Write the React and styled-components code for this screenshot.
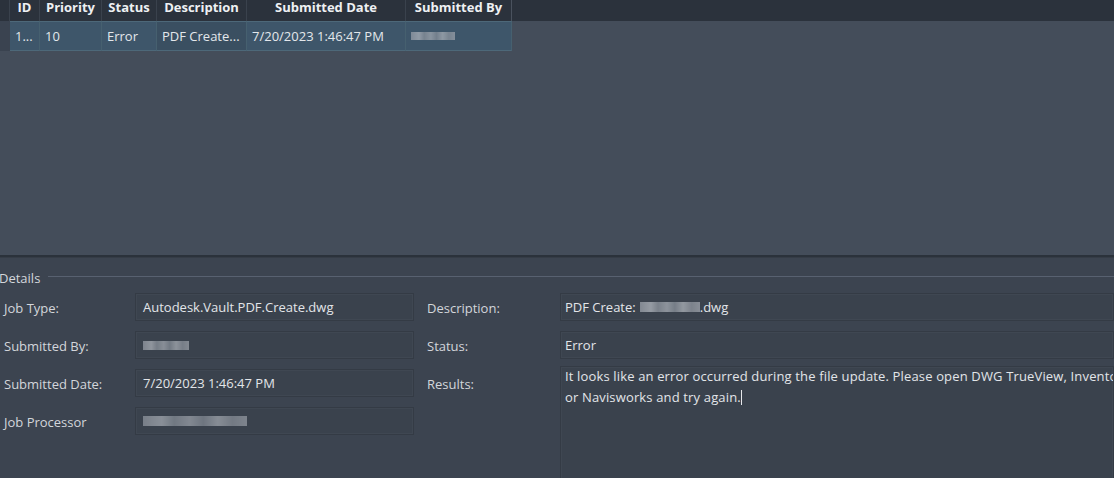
import React from 'react'
import styled, { createGlobalStyle } from 'styled-components'

const Global = createGlobalStyle`
    html, body {
        margin: 0;
        padding: 0;
        background: #3c4450;
        overflow: hidden;
    }
    * { box-sizing: border-box; }
`

const Window = styled.div`
    width: 1114px;
    height: 478px;
    display: flex;
    flex-direction: column;
    font-family: 'Open Sans', 'Liberation Sans', sans-serif;
    font-size: 13px;
    color: #dde0e4;
    overflow: hidden;
`

const GridArea = styled.div`
    height: 255px;
    flex: none;
    background: #444d5a;
    display: flex;
    flex-direction: column;
`

const cols = '10px 30px 62px 55px 90px 159px 106px'

const HeaderRow = styled.div`
    display: grid;
    height: 21px;
    background: #2b323c;
    width: 100%;
    grid-template-columns: ${cols} 1fr;
`

const HeaderCell = styled.div`
    font-weight: 700;
    color: #eef0f3;
    text-align: center;
    line-height: 14px;
    white-space: nowrap;
    overflow: hidden;
    border-right: ${p => (p.$last ? '1px solid #4a525e' : '1px solid #3a424d')};
`

const DataRow = styled.div`
    display: grid;
    grid-template-columns: ${cols};
    height: 30px;
`

const Cell = styled.div`
    display: flex;
    align-items: center;
    padding-left: 5px;
    white-space: nowrap;
    overflow: hidden;
    background: ${p => (p.$stub ? '#3a4350' : p.$dim ? '#3a4f61' : '#3e566a')};
    border-right: 1px solid ${p => (p.$stub ? '#3a4350' : '#46606f')};
    border-top: 1px solid ${p => (p.$stub ? '#3a4350' : '#4d6879')};
    border-bottom: 1px solid ${p => (p.$stub ? '#3a4350' : '#4d6879')};
    color: #e3e7eb;
`

const Splitter = styled.div`
    height: 3px;
    flex: none;
    background: #2b323b;
    border-bottom: 1px solid #353c46;
`

const Details = styled.div`
    flex: 1;
    background: #3c4450;
    padding-top: 12px;
`

const Legend = styled.div`
    display: flex;
    align-items: center;
    gap: 8px;
    margin-left: -1px;
    height: 16px;
    color: #d4d7dc;
`

const LegendLine = styled.div`
    flex: 1;
    height: 1px;
    background: #586170;
    margin-top: -3px;
`

const Fields = styled.div`
    display: grid;
    grid-template-columns: 135px 279px 146px 1fr;
    grid-auto-rows: 28px;
    row-gap: 10px;
    margin-top: 7px;
`

const Label = styled.div`
    display: flex;
    align-items: center;
    padding-left: ${p => (p.$right ? '13px' : '4px')};
    padding-top: 2px;
    color: #d3d6db;
`

const ValueBox = styled.div`
    display: flex;
    align-items: ${p => (p.$multi ? 'flex-start' : 'center')};
    padding: ${p => (p.$multi ? '0 0 0 4px' : p.$right ? '0 0 0 4px' : '0 0 0 7px')};
    background: #3a424d;
    border: 1px solid #343b45;
    box-shadow: inset 0 0 0 1px #3f4752;
    color: #e2e5e9;
    white-space: nowrap;
    line-height: 21px;
    overflow: hidden;
    ${p => p.$multi && 'grid-row: span 3; height: 118px; margin-top: -3px;'}
`

const ResultText = styled.div`
    width: 600px;
    white-space: pre;
    letter-spacing: 0.15px;
    margin-top: -1px;
`

const Caret = styled.span`
    display: inline-block;
    width: 1px;
    height: 15px;
    background: #e6e8eb;
    vertical-align: -3px;
`

const Blur = styled.span`
    display: inline-block;
    width: ${p => p.$w}px;
    height: ${p => p.$h || 9}px;
    margin-left: ${p => p.$gap || 0}px;
    background: linear-gradient(90deg, #9aa0a9 0%, #b4b9c0 18%, #8f969f 30%, #a9aeb6 45%, #8a919b 58%, #b0b5bc 72%, #9298a1 86%, #a3a8b0 100%);
    filter: blur(0.6px);
    opacity: ${p => p.$o || 0.85};
    vertical-align: middle;
`

const App = () => {
    return (
        <Window>
            <Global />
            <GridArea>
                <HeaderRow>
                    <HeaderCell />
                    <HeaderCell>ID</HeaderCell>
                    <HeaderCell>Priority</HeaderCell>
                    <HeaderCell>Status</HeaderCell>
                    <HeaderCell>Description</HeaderCell>
                    <HeaderCell>Submitted Date</HeaderCell>
                    <HeaderCell $last>Submitted By</HeaderCell>
                    <div />
                </HeaderRow>
                <DataRow>
                    <Cell $stub />
                    <Cell>1...</Cell>
                    <Cell>10</Cell>
                    <Cell>Error</Cell>
                    <Cell $dim>PDF Create...</Cell>
                    <Cell>7/20/2023 1:46:47 PM</Cell>
                    <Cell><Blur $w={44} $h={8} $o={0.7} /></Cell>
                </DataRow>
            </GridArea>
            <Splitter />
            <Details>
                <Legend>
                    Details
                    <LegendLine />
                </Legend>
                <Fields>
                    <Label>Job Type:</Label>
                    <ValueBox>Autodesk.Vault.PDF.Create.dwg</ValueBox>
                    <Label $right>Description:</Label>
                    <ValueBox $right>PDF Create:<Blur $w={60} $h={10} $o={0.75} $gap={4} />.dwg</ValueBox>

                    <Label>Submitted By:</Label>
                    <ValueBox><Blur $w={46} $h={9} $o={0.7} /></ValueBox>
                    <Label $right>Status:</Label>
                    <ValueBox $right>Error</ValueBox>

                    <Label>Submitted Date:</Label>
                    <ValueBox>7/20/2023 1:46:47 PM</ValueBox>
                    <Label $right>Results:</Label>
                    <ValueBox $multi>
                        <ResultText>
                            {'It looks like an error occurred during the file update. Please open DWG TrueView, Inventor\nor Navisworks and try again.'}
                            <Caret />
                        </ResultText>
                    </ValueBox>

                    <Label>Job Processor</Label>
                    <ValueBox><Blur $w={104} $h={10} $o={0.65} /></ValueBox>
                </Fields>
            </Details>
        </Window>
    )
}

export default App
